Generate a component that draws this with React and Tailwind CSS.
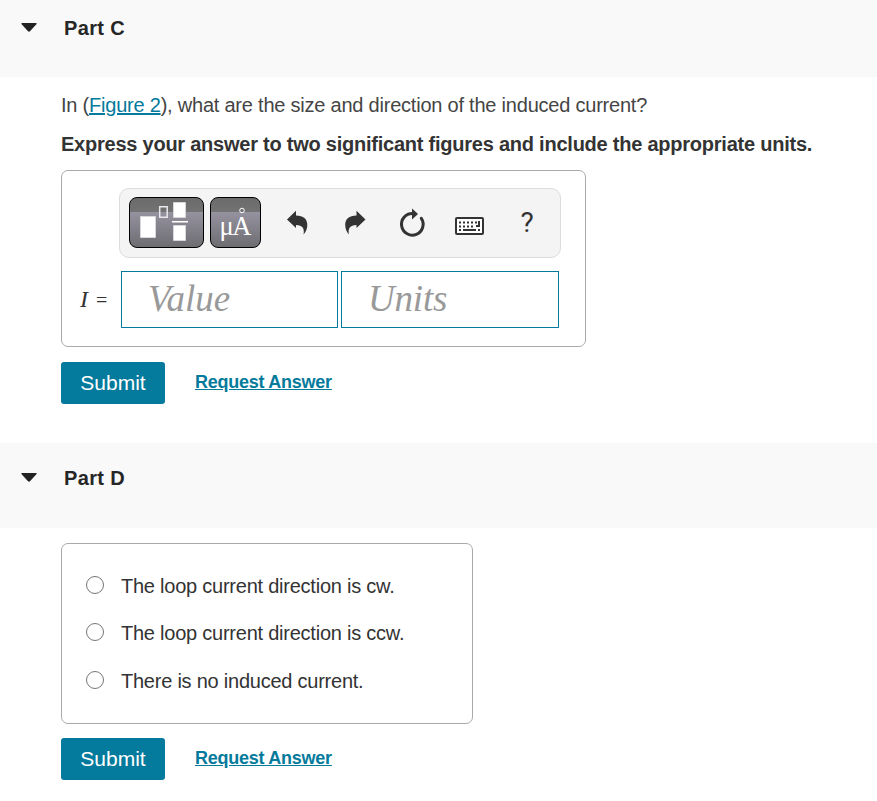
import React from "react";

function PartHeader({ title, className }) {
  return (
    <header className={`flex items-start bg-[#f9f9f9] pl-[21px] ${className}`}>
      <svg className="mt-[23px] h-[10px] w-4 shrink-0" viewBox="0 0 16 10" fill="#222">
        <path d="M1.3 0h13.4q1.7 0 .7 1.3L9.2 8q-1.2 1.3-2.4 0L.6 1.3Q-.3 0 1.3 0z" />
      </svg>
      <h2 className="ml-[27px] mt-[13px] text-[20px] font-bold leading-[30px] tracking-[0.35px] text-[#262626]">{title}</h2>
    </header>
  );
}

function Actions({ className }) {
  return (
    <div className={`ml-[61px] flex h-[42px] items-center ${className}`}>
      <button className="h-[42px] w-[104px] rounded-[3px] bg-[#047a9c] text-[21px] text-white">Submit</button>
      <a href="#" className="ml-[30px] mt-[-2px] text-[18px] font-bold leading-6 tracking-[-0.25px] text-[#047a9c] underline">Request Answer</a>
    </div>
  );
}

function Toolbar() {
  return (
    <div className="ml-[57px] flex h-[70px] w-[442px] rounded-[10px] border border-[#dcdcdc] bg-[#f4f4f4] pl-[9px] pt-2">
      <button className="h-[51px] w-[75px] shrink-0 rounded-[8px] border border-black bg-[linear-gradient(#6b6b6b_0,#737373_14px,#9692a0_14px,#6d6d71_100%)]">
        <svg width="73" height="49" viewBox="0 0 73 49">
          <path fill="#fff" stroke="#d8d8dc" strokeWidth="1" d="M10.500 18.500h15v21h-15zM43.500 4.500h12v15h-12zM43.500 27.500h12v15h-12z" />
          <path fill="#fff" d="M42 23h16v1.500H42z" />
          <path fill="none" stroke="#e8e8ec" strokeWidth="1.500" d="M29.700 8.700h7.500v10.500h-7.500z" />
        </svg>
      </button>
      <button className="ml-[6px] h-[51px] w-[51px] shrink-0 rounded-[8px] border border-black bg-[linear-gradient(#6b6b6b_0,#737373_14px,#9692a0_14px,#6d6d71_100%)]">
        <svg width="49" height="49" viewBox="0 0 49 49" fill="#fff">
          <text x="8.500" y="36.500" fontSize="26.500" textLength="32" fontFamily="Liberation Serif, serif">μA</text>
          <circle cx="31" cy="12.500" r="2.300" fill="none" stroke="#fff" />
        </svg>
      </button>
      <svg className="shrink-0" width="290" height="51" viewBox="261 197 290 51" fill="#333">
        <path d="M287 219.500l9-8.700v4.700c7.500 0 11.300 3.500 11.300 9.500 0 4-1.500 7-3.700 9.500 1-6-1-9.500-7.600-9.500v3z" />
        <path d="M365.500 219.500l-9-8.700v4.700c-7.500 0-11.300 3.500-11.300 9.500 0 4 1.500 7 3.700 9.500-1-6 1-9.500 7.600-9.500v3z" />
        <path fill="none" stroke="#333" strokeWidth="3" strokeLinecap="round" d="M412.500 213.500a10.800 10.800 0 1 0 8.800 4.800" />
        <path d="M412 208.500l6 5.500-6 5.500z" />
        <rect x="456" y="218" width="27" height="16" rx="1" fill="#fff" stroke="#333" strokeWidth="2" />
        <path fill="none" stroke="#333" strokeWidth="2" d="M459 222.500h18M459 226.500h16" strokeDasharray="2 2" />
        <path d="M478 221h2v6h-4v-2h2zM459 229h2v2h-2zM463 229h13v2h-13zM478 229h2v2h-2z" />
        <text x="520.500" y="232" fontSize="28" fontFamily="Roboto, sans-serif">?</text>
      </svg>
    </div>
  );
}

const choices = ["The loop current direction is cw.", "The loop current direction is ccw.", "There is no induced current."];

export default function App() {
  return (
    <main className="flex h-[801px] w-[877px] flex-col overflow-hidden whitespace-nowrap bg-white font-['Liberation_Sans',Arial,sans-serif] text-[#333]">
      <PartHeader title="Part C" className="h-[77px]" />
      <p className="ml-[61px] mt-[13px] text-[20px] leading-[30px] tracking-[-0.22px] text-[#454545]">
        In (<a href="#" className="text-[#047a9c] underline">Figure 2</a>), what are the size and direction of the induced current?
      </p>
      <p className="ml-[61px] mt-[9px] text-[20px] font-bold leading-[30px] tracking-[-0.235px]">Express your answer to two significant figures and include the appropriate units.</p>
      <section className="ml-[61px] mt-[11px] h-[177px] w-[525px] rounded-[7px] border border-[#aaa] pt-[17px]">
        <Toolbar />
        <div className="mt-[13px] flex h-[57px] items-center">
          <div className="mt-[-2px] flex w-[59px] items-baseline pl-[18px] font-['Liberation_Serif',serif] text-[24px]">
            <i>I</i><span className="ml-[8px] text-[20px]">=</span>
          </div>
          <div className="h-[57px] w-[217px] border border-[#047a9c] pl-[26px] font-['Liberation_Serif',serif] text-[37px] italic leading-[54px] text-[#999]">Value</div>
          <div className="ml-[3px] h-[57px] w-[218px] border border-[#047a9c] pl-[26px] font-['Liberation_Serif',serif] text-[37px] italic leading-[54px] tracking-[-0.2px] text-[#999]">Units</div>
        </div>
      </section>
      <Actions className="mt-[15px]" />
      <PartHeader title="Part D" className="mt-[39px] h-[85px] pt-[7px]" />
      <section className="ml-[61px] mt-[15px] h-[181px] w-[412px] rounded-[7px] border border-[#aaa] pl-[24px] pt-[18px]">
        {choices.map((choice) => (
          <label key={choice} className="flex h-[46px] items-center text-[20px] first:mb-px last:mt-[2px]">
            <input type="radio" name="direction" className="size-[18px] appearance-none rounded-full border-[1.5px] border-[#767676]" />
            <span className="ml-[17px] mt-[2px] tracking-[-0.235px]">{choice}</span>
          </label>
        ))}
      </section>
      <Actions className="mt-[14px]" />
    </main>
  );
}
